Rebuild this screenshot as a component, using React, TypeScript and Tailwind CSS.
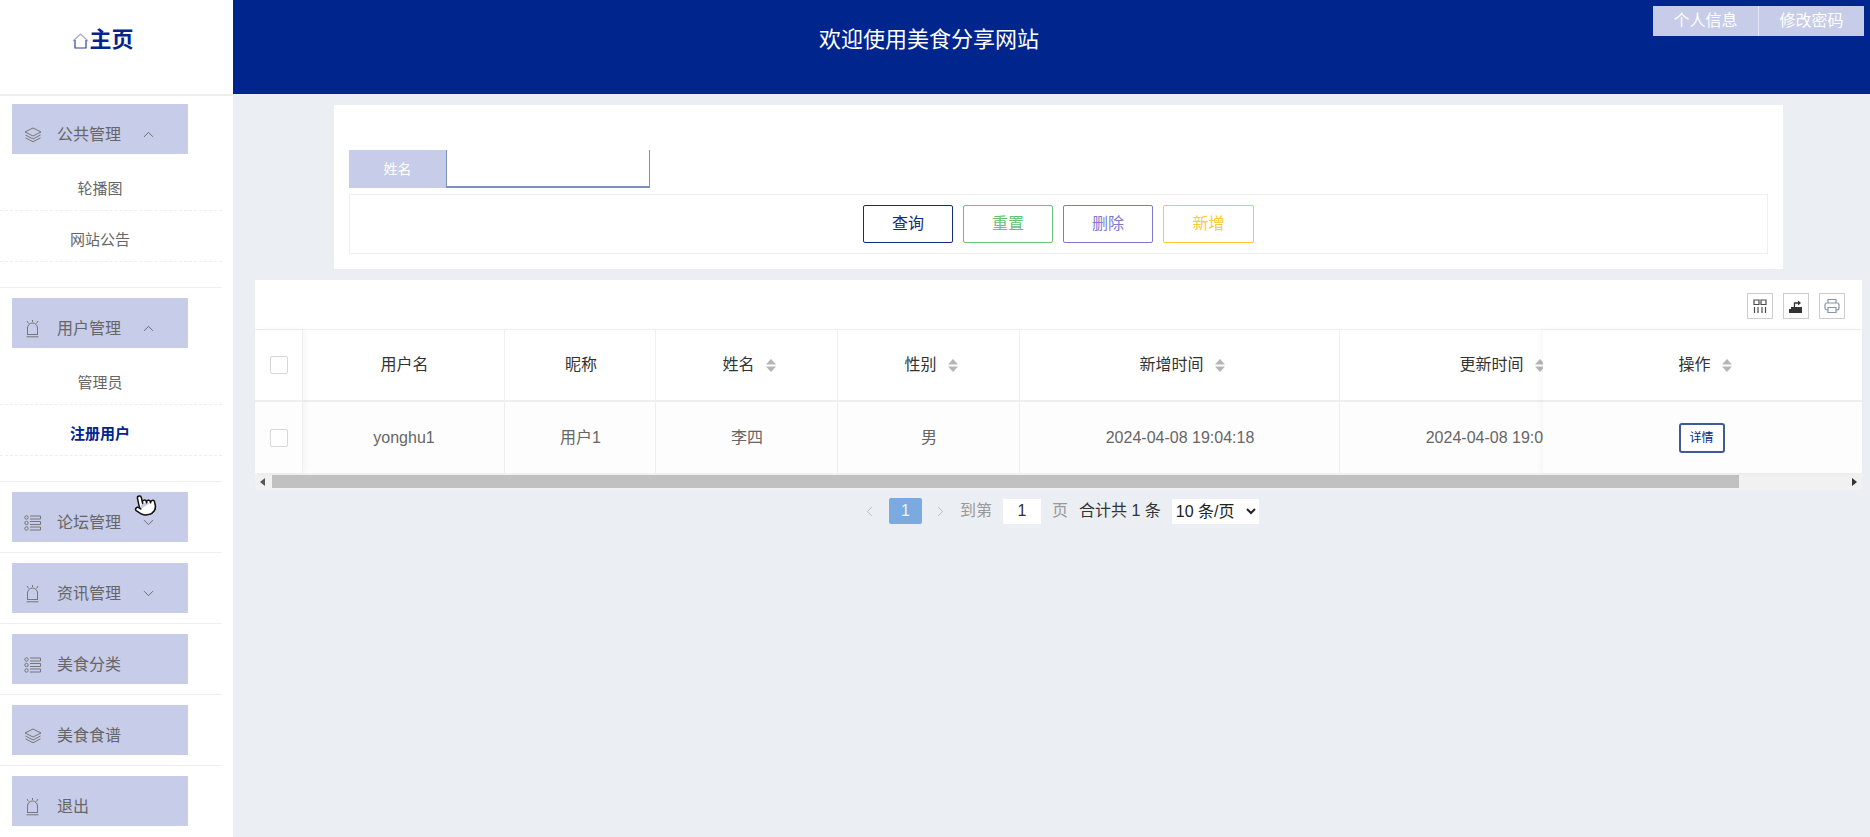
import React from "react";
import { ChevronDown, ChevronLeft, ChevronRight, ChevronUp, Pointer } from "lucide-react";

function LayersIcon() {
  return (
    <svg width="18" height="16" viewBox="0 0 18 16" fill="none" stroke="#777" strokeWidth="1">
      <path d="M9 1 L17 5 L9 9 L1 5 Z" />
      <path d="M1.5 8 L9 12 L16.5 8" />
      <path d="M1.5 10.8 L9 14.8 L16.5 10.8" />
    </svg>
  );
}

function AlarmIcon() {
  return (
    <svg width="13" height="18" viewBox="0 0 13 18" fill="none" stroke="#777" strokeWidth="1">
      <path d="M1.5 15 V8 a5 5 0 0 1 10 0 V15" />
      <path d="M1 14.5 H12" />
      <path d="M0.5 16.8 H12.5" />
      <path d="M6.5 0 V2 M1 1 L2.5 3.5 M12 1 L10.5 3.5" />
    </svg>
  );
}

function ListIcon() {
  return (
    <svg width="17" height="16" viewBox="0 0 17 16" fill="none" stroke="#777" strokeWidth="1">
      <circle cx="2.5" cy="2.5" r="1.7" />
      <circle cx="2.5" cy="8" r="1.7" />
      <circle cx="2.5" cy="13.5" r="1.7" />
      <path d="M6 1 H16.5 V4 H6 M6 6.5 H16.5 V9.5 H6 M6 12 H16.5 V15 H6" />
    </svg>
  );
}

function SortIcon() {
  return (
    <svg className="ml-[11px] shrink-0" width="10" height="13" viewBox="0 0 10 13" fill="#b5b5b5">
      <path d="M5 0 L10 5.5 H0 Z" />
      <path d="M5 13 L10 7.5 H0 Z" />
    </svg>
  );
}

function MenuItem({ icon, label, arrow }: { icon: React.ReactNode; label: string; arrow?: "up" | "down" }) {
  return (
    <div className="flex h-[50px] w-[176px] items-center bg-[#c7cce9] pt-[11px] text-base text-[#666]">
      <div className="mr-[4px] flex w-[41px] justify-center">{icon}</div>
      <span>{label}</span>
      {arrow === "up" && <ChevronUp className="ml-[19px]" size={17} strokeWidth={1.3} color="#666" />}
      {arrow === "down" && <ChevronDown className="ml-[19px]" size={17} strokeWidth={1.3} color="#666" />}
    </div>
  );
}

function SubItem({ label, active }: { label: string; active?: boolean }) {
  return (
    <div
      className={
        active
          ? "flex h-[51px] items-center justify-center border-b border-dashed border-[#eee] pt-[9px] pr-[22px] text-[15px] font-bold text-[#00258d]"
          : "flex h-[51px] items-center justify-center border-b border-dashed border-[#eee] pt-[9px] pr-[22px] text-[15px] text-[#666]"
      }
    >
      {label}
    </div>
  );
}

function Sidebar() {
  return (
    <aside className="relative w-[233px] shrink-0 bg-white">
      <div className="flex h-[96px] items-center justify-center border-b-2 border-[#eee] pr-[27px] pb-[16px]">
        <svg width="17" height="16" viewBox="0 0 17 16" fill="none" strokeWidth="1.2" className="mt-[3px]">
          <path d="M1 8 L8.5 1 L16 8" stroke="#a6adc4" />
          <path d="M3 7 V15 H14 V7" stroke="#2a4796" />
        </svg>
        <span className="text-[22px] font-bold text-[#00258d]">主页</span>
      </div>
      <div className="w-[222px] pt-[8px]">
        <div className="border-b border-[#eee] pb-[25px]">
          <div className="pl-[12px]">
            <MenuItem icon={<LayersIcon />} label="公共管理" arrow="up" />
          </div>
          <div className="pt-[6px]">
            <SubItem label="轮播图" />
            <SubItem label="网站公告" />
          </div>
        </div>
        <div className="border-b border-[#eee] pt-[10px] pb-[25px]">
          <div className="pl-[12px]">
            <MenuItem icon={<AlarmIcon />} label="用户管理" arrow="up" />
          </div>
          <div className="pt-[6px]">
            <SubItem label="管理员" />
            <SubItem label="注册用户" active />
          </div>
        </div>
        <div className="border-b border-[#eee] py-[10px] pl-[12px]">
          <MenuItem icon={<ListIcon />} label="论坛管理" arrow="down" />
        </div>
        <div className="border-b border-[#eee] py-[10px] pl-[12px]">
          <MenuItem icon={<AlarmIcon />} label="资讯管理" arrow="down" />
        </div>
        <div className="border-b border-[#eee] py-[10px] pl-[12px]">
          <MenuItem icon={<ListIcon />} label="美食分类" />
        </div>
        <div className="border-b border-[#eee] py-[10px] pl-[12px]">
          <MenuItem icon={<LayersIcon />} label="美食食谱" />
        </div>
        <div className="pt-[10px] pl-[12px]">
          <MenuItem icon={<AlarmIcon />} label="退出" />
        </div>
      </div>
      {/* mouse cursor caught in the screenshot */}
      <Pointer className="absolute top-[493px] left-[133px] rotate-[-12deg]" size={24} strokeWidth={1.5} color="#111" fill="#fff" />
    </aside>
  );
}

function Topbar() {
  return (
    <header className="flex h-[94px] items-start justify-between bg-[#00258d] pr-[6px] pl-[586px]">
      <h1 className="pt-[24px] text-[22px] leading-[32px] font-normal text-white">欢迎使用美食分享网站</h1>
      <div className="mt-[6px] flex h-[30px] gap-[1px] bg-[#e4e7f5] text-base text-white">
        <div className="flex w-[105px] items-center justify-center bg-[#c7cce9]">个人信息</div>
        <div className="flex w-[105px] items-center justify-center bg-[#c7cce9]">修改密码</div>
      </div>
    </header>
  );
}

function SearchCard() {
  return (
    <section className="ml-[101px] w-[1449px] bg-white px-[15px] pt-[45px] pb-[15px]">
      <div className="flex h-[38px]">
        <div className="flex w-[97px] items-center justify-center bg-[#c7cce9] text-sm text-white">姓名</div>
        <div className="w-[204px] border-r border-b-2 border-l border-[#7b90bd]" />
      </div>
      <div className="mt-[6px] flex h-[60px] items-center justify-center gap-[10px] border border-[#eee] text-base">
        <button className="h-[38px] w-[90px] rounded-[2px] border border-[#0d2d80] text-[#0d2d80]">查询</button>
        <button className="h-[38px] w-[90px] rounded-[2px] border border-[#67c27a] text-[#67c27a]">重置</button>
        <button className="h-[38px] w-[90px] rounded-[2px] border border-[#7f78d2] text-[#7f78d2]">删除</button>
        <button className="h-[38px] w-[91px] rounded-[2px] border border-[#ffc933] text-[#ffc933]">新增</button>
      </div>
    </section>
  );
}

const columns = [
  { title: "用户名", value: "yonghu1", width: "w-[202px]" },
  { title: "昵称", value: "用户1", width: "w-[151px]" },
  { title: "姓名", value: "李四", width: "w-[182px]", sort: true },
  { title: "性别", value: "男", width: "w-[182px]", sort: true },
  { title: "新增时间", value: "2024-04-08 19:04:18", width: "w-[320px]", sort: true },
  { title: "更新时间", value: "2024-04-08 19:04:18", width: "w-[320px]", sort: true },
];

function Checkbox() {
  return <div className="h-[18px] w-[18px] rounded-[2px] border border-[#d8d8d8] bg-white" />;
}

function DataTable() {
  return (
    <section className="mt-[11px] ml-[22px] w-[1607px]">
      <div className="flex h-[50px] items-start justify-end gap-[10px] border-b border-[#eee] bg-white pt-[13px] pr-[17px]">
        <div className="flex h-[26px] w-[26px] items-center justify-center border border-[#ccc]">
          <svg width="14" height="14" viewBox="0 0 14 14" fill="none" stroke="#4a4a55" strokeWidth="1.2">
            <path d="M1 1 H6 V5.5 H1 Z M8 1 H13 V5.5 H8 Z" />
            <path d="M1.5 8 V14 M5 8 V14 M9 8 V14 M12.5 8 V14" />
          </svg>
        </div>
        <div className="flex h-[26px] w-[26px] items-center justify-center border border-[#ccc]">
          <svg width="16" height="16" viewBox="0 0 16 16" fill="none">
            <path d="M3 9 H14 V15 H1 V11 H3 Z" fill="#333" />
            <path d="M6.5 9 V5 H10" stroke="#333" strokeWidth="1.3" />
            <path d="M10 2.5 L13 5 L10 7.5 Z" fill="#333" />
          </svg>
        </div>
        <div className="flex h-[26px] w-[26px] items-center justify-center border border-[#ccc]">
          <svg width="16" height="16" viewBox="0 0 16 16" fill="none" stroke="#8a94a6" strokeWidth="1.2">
            <path d="M4 5 V1.5 H12 V5" />
            <rect x="1" y="5" width="14" height="7" rx="2" />
            <path d="M4 9.5 H12 V14.5 H4 Z" fill="#fff" />
          </svg>
        </div>
      </div>
      <div className="flex h-[143px] bg-white text-base">
        <div className="relative z-10 w-[48px] shrink-0 shadow-[2px_0_6px_rgba(0,0,0,0.04)]">
          <div className="flex h-[72px] items-center justify-center border-r border-b-2 border-[#eee]">
            <Checkbox />
          </div>
          <div className="flex h-[71px] items-center justify-center border-r border-[#eee] bg-[#fdfdfd]">
            <Checkbox />
          </div>
        </div>
        <div className="min-w-0 flex-1 overflow-hidden">
          <div className="flex h-[72px] w-max border-b-2 border-[#eee] text-[#333]">
            {columns.map((col) => (
              <div
                key={col.title}
                className={`flex ${col.width} shrink-0 items-center justify-center border-r border-[#eee] ${col.sort ? "pl-[5px]" : "pl-[2px]"}`}
              >
                {col.title}
                {col.sort && <SortIcon />}
              </div>
            ))}
          </div>
          <div className="flex h-[71px] w-max bg-[#fdfdfd] text-[#666]">
            {columns.map((col) => (
              <div key={col.title} className={`flex ${col.width} shrink-0 items-center justify-center border-r border-[#eee] pl-[1px]`}>
                {col.value}
              </div>
            ))}
          </div>
        </div>
        <div className="relative z-10 w-[319px] shrink-0 bg-white shadow-[-2px_0_6px_rgba(0,0,0,0.04)]">
          <div className="flex h-[72px] items-center justify-center border-b-2 border-[#eee] pl-[5px] text-[#333]">
            操作
            <SortIcon />
          </div>
          <div className="flex h-[71px] items-center justify-center bg-[#fdfdfd] pr-[2px]">
            <button className="h-[30px] w-[46px] rounded-[3px] border-2 border-[#3f5a96] bg-white text-xs text-[#00258d]">详情</button>
          </div>
        </div>
      </div>
      <div className="flex h-[17px] items-center bg-[#f1f1f1] pr-[5px] pl-[5px]">
        <svg width="6" height="8" viewBox="0 0 6 8" fill="#555">
          <path d="M5 0 V8 L0 4 Z" />
        </svg>
        <div className="ml-[6px] h-[13px] w-[1467px] bg-[#c1c1c1]" />
        <svg className="ml-auto" width="6" height="8" viewBox="0 0 6 8" fill="#333">
          <path d="M1 0 V8 L6 4 Z" />
        </svg>
      </div>
    </section>
  );
}

function Pagination() {
  return (
    <div className="mt-[8px] ml-[22px] flex h-[26px] items-center pl-[606px] text-base">
      <ChevronLeft size={17} strokeWidth={1} color="#aaa" />
      <div className="ml-[11px] flex h-[26px] w-[33px] items-center justify-center rounded-[2px] bg-[#7aaae0] text-[#eef4fb]">1</div>
      <ChevronRight className="ml-[10px]" size={17} strokeWidth={1} color="#aaa" />
      <span className="ml-[11px] text-[#999]">到第</span>
      <div className="ml-[11px] flex h-[25px] w-[38px] items-center justify-center bg-white text-[#333]">1</div>
      <span className="ml-[11px] text-[#999]">页</span>
      <span className="ml-[11px] text-[#333]">合计共 1 条</span>
      <select className="ml-[11px] h-[25px] w-[87px] bg-white text-[#222]" defaultValue="10">
        <option value="10">10 条/页</option>
      </select>
    </div>
  );
}

export default function App() {
  return (
    <div className="flex h-[837px] overflow-hidden bg-[#ebeef3] font-['Liberation_Sans','Noto_Sans_CJK_SC',sans-serif]">
      <Sidebar />
      <main className="min-w-0 flex-1">
        <Topbar />
        <div className="pt-[11px]">
          <SearchCard />
          <DataTable />
          <Pagination />
        </div>
      </main>
    </div>
  );
}
